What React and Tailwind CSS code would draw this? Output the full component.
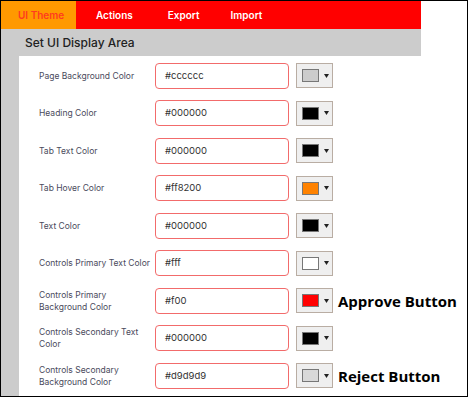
export default function App() {
  const rows = [
    { label: "Page Background Color", value: "#cccccc", color: "#cccccc" },
    { label: "Heading Color", value: "#000000", color: "#000000" },
    { label: "Tab Text Color", value: "#000000", color: "#000000" },
    { label: "Tab Hover Color", value: "#ff8200", color: "#ff8200" },
    { label: "Text Color", value: "#000000", color: "#000000" },
    { label: "Controls Primary Text Color", value: "#fff", color: "#ffffff" },
    { label: "Controls Primary Background Color", value: "#f00", color: "#ff0000", note: "Approve Button" },
    { label: "Controls Secondary Text Color", value: "#000000", color: "#000000" },
    { label: "Controls Secondary Background Color", value: "#d9d9d9", color: "#d9d9d9", note: "Reject Button" },
  ];
  const poppins = { fontFamily: "Inter, 'Noto Sans', sans-serif" };
  return (
    <div className="w-[468px] h-[397px] bg-white border border-black overflow-hidden flex flex-col" style={poppins}>
      <div className="w-[420px] h-[28px] bg-[#ff0000] flex items-stretch text-[10px] font-semibold shrink-0">
        <div className="w-[75px] bg-[#ff9900] text-[#ff3b1f] flex items-center pl-[17px]">UI Theme</div>
        <div className="text-white flex items-center pl-[20px]">Actions</div>
        <div className="text-white flex items-center pl-[35px]">Export</div>
        <div className="text-white flex items-center pl-[31px]">Import</div>
      </div>
      <div className="w-[420px] h-[27px] bg-[#cccccc] flex items-center pl-[24px] text-[12px] font-medium text-[#222] shrink-0">
        Set UI Display Area
      </div>
      <div className="flex flex-1">
        <div className="w-[18px] bg-[#cccccc] shrink-0" />
        <div className="flex-1 flex flex-col pt-[1px]">
          {rows.map((r) => (
            <div key={r.label} className="h-[37.5px] flex items-center shrink-0">
              <div className="w-[136px] shrink-0 pl-[20px] pr-[1px] text-[8.5px] leading-[12px] text-[#4a4a5c]">{r.label}</div>
              <div className="w-[134px] shrink-0 h-[26px] border border-[#f26b6b] rounded-[4px] flex items-center pl-[9px] text-[9.5px] text-[#333]">
                {r.value}
              </div>
              <div className="ml-[7px] shrink-0 w-[37px] h-[25px] bg-[#efefef] border border-[#b9ada3] flex items-center pl-[5px]">
                <div className="w-[17px] h-[13px] border border-[#777]" style={{ backgroundColor: r.color }} />
                <svg className="ml-[5px]" width="5" height="4" viewBox="0 0 5 4">
                  <path d="M0 0 L5 0 L2.5 4 Z" fill="#222" />
                </svg>
              </div>
              {r.note && (
                <div className="ml-[5px] text-[15px] font-bold text-black whitespace-nowrap" style={{ fontFamily: "'Open Sans', sans-serif" }}>
                  {r.note}
                </div>
              )}
            </div>
          ))}
        </div>
      </div>
    </div>
  );
}
